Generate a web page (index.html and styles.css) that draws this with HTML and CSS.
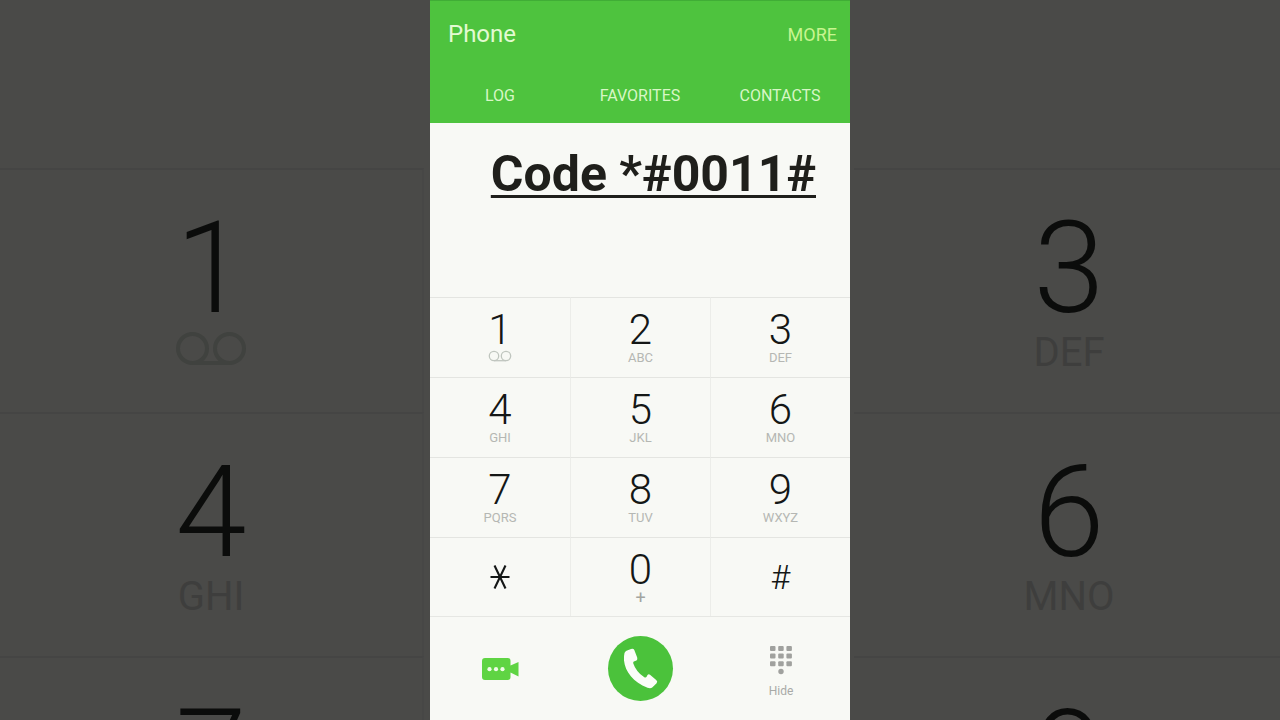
FILE: index.html
```html
<!DOCTYPE html>
<html lang="en">
<head>
<meta charset="utf-8">
<meta name="viewport" content="width=device-width, initial-scale=1">
<title>Phone</title>
<link rel="stylesheet" href="styles.css">
</head>
<body>
<div class="stage">
  <div class="side side-left" aria-hidden="true">
    <div class="side-cell">
      <span class="side-digit">1</span>
      <svg class="side-voicemail" viewBox="0 0 24 12"><g fill="none" stroke="currentColor" stroke-width="1.3"><circle cx="6" cy="6" r="4.7"/><circle cx="18" cy="6" r="4.7"/><path d="M6 10.7H18"/></g></svg>
    </div>
    <div class="side-cell"><span class="side-digit">4</span><span class="side-letters">GHI</span></div>
    <div class="side-cell"><span class="side-digit">7</span></div>
  </div>

  <main class="phone">
    <header class="header">
      <div class="title-bar">
        <h1 class="title">Phone</h1>
        <button class="more" type="button">MORE</button>
      </div>
      <nav class="tabs">
        <a class="tab" href="#log">LOG</a>
        <a class="tab" href="#favorites">FAVORITES</a>
        <a class="tab" href="#contacts">CONTACTS</a>
      </nav>
    </header>

    <div class="display"><output class="code">Code *#0011#</output></div>

    <div class="keypad">
      <button class="key" type="button" aria-label="1, voicemail">
        <span class="digit">1</span>
        <svg class="voicemail" viewBox="0 0 24 12"><g fill="none" stroke="currentColor" stroke-width="1.3"><circle cx="6" cy="6" r="4.7"/><circle cx="18" cy="6" r="4.7"/><path d="M6 10.7H18"/></g></svg>
      </button>
      <button class="key" type="button"><span class="digit">2</span><span class="letters">ABC</span></button>
      <button class="key" type="button"><span class="digit">3</span><span class="letters">DEF</span></button>
      <button class="key" type="button"><span class="digit">4</span><span class="letters">GHI</span></button>
      <button class="key" type="button"><span class="digit">5</span><span class="letters">JKL</span></button>
      <button class="key" type="button"><span class="digit">6</span><span class="letters">MNO</span></button>
      <button class="key" type="button"><span class="digit">7</span><span class="letters">PQRS</span></button>
      <button class="key" type="button"><span class="digit">8</span><span class="letters">TUV</span></button>
      <button class="key" type="button"><span class="digit">9</span><span class="letters">WXYZ</span></button>
      <button class="key key-symbol" type="button" aria-label="Star">
        <svg class="star" viewBox="0 0 20 24"><path d="M.5 12H19.500M4.500 .5L15.500 23.500M15.500 .5L4.500 23.500" fill="none" stroke="currentColor" stroke-width="2.100"/></svg>
      </button>
      <button class="key" type="button"><span class="digit">0</span><span class="letters plus">+</span></button>
      <button class="key key-symbol" type="button"><span class="hash">#</span></button>
    </div>

    <footer class="actions">
      <button class="action" type="button" aria-label="Video call">
        <svg class="camera" viewBox="0 0 37 22"><path fill="#5fd443" d="M3 0H25.500Q28.500 0 28.500 3V7.500L36.500 4V18.500L28.500 14.500V19Q28.500 22 25.500 22H3Q0 22 0 19V3Q0 0 3 0Z"/><g fill="#f0fce8"><circle cx="7.500" cy="11.200" r="2.100"/><circle cx="14" cy="11.200" r="2.100"/><circle cx="20.500" cy="11.200" r="2.100"/></g></svg>
      </button>
      <button class="action call" type="button" aria-label="Call">
        <svg class="handset" viewBox="0 0 65 65"><path fill="#fbfdf8" d="M16.500 17Q17 15.500 18.500 14.700L23 13Q25.500 12.300 26.300 14L29.200 21.500Q29.800 23.500 28.500 24.600L25.800 25.400Q24.900 26 25.300 27.400Q28 35.500 36 41Q37.700 42.200 38.600 40.800L39.500 39Q40.600 37.600 42 38.700L48.200 44Q50 45.500 48.600 47.200L44.500 51.200Q42.800 53 39.500 51.800C25.500 46.500 17 35.500 16 24.500Q15.700 20 16.500 17Z"/></svg>
      </button>
      <button class="action hide" type="button">
        <svg class="grid-icon" viewBox="0 0 22 29"><g fill="#a0a19e"><rect width="5.500" height="5" rx="1"/><rect x="8.200" width="5.500" height="5" rx="1"/><rect x="16.400" width="5.500" height="5" rx="1"/><rect y="7.600" width="5.500" height="5" rx="1"/><rect x="8.200" y="7.600" width="5.500" height="5" rx="1"/><rect x="16.400" y="7.600" width="5.500" height="5" rx="1"/><rect y="15.200" width="5.500" height="5" rx="1"/><rect x="8.200" y="15.200" width="5.500" height="5" rx="1"/><rect x="16.400" y="15.200" width="5.500" height="5" rx="1"/><circle cx="11" cy="25.500" r="2.700"/></g></svg>
        <span class="hide-label">Hide</span>
      </button>
    </footer>
  </main>

  <div class="side side-right" aria-hidden="true">
    <div class="side-cell"><span class="side-digit">3</span><span class="side-letters">DEF</span></div>
    <div class="side-cell"><span class="side-digit">6</span><span class="side-letters">MNO</span></div>
    <div class="side-cell"><span class="side-digit">9</span></div>
  </div>
</div>
</body>
</html>
```
FILE: styles.css
```css
* {
  box-sizing: border-box;
}

body {
  margin: 0;
  background: #4a4a48;
  font-family: Roboto, "Liberation Sans", sans-serif;
}

button {
  margin: 0;
  padding: 0;
  border: 0;
  background: none;
  color: inherit;
  font: inherit;
  cursor: pointer;
}

svg {
  display: block;
}

.stage {
  display: grid;
  grid-template-columns: 43fr 42fr 43fr;
  height: 100vh;
  min-height: 640px;
  overflow: hidden;
}

/* Dimmed, enlarged keypad on both sides of the phone */
.side {
  display: grid;
  grid-template-rows: repeat(3, 244px);
  align-content: start;
  padding-top: 168px;
  overflow: hidden;
  color: #0b0c0b;
}

.side-left {
  padding-right: 6px;
}

.side-left .side-cell {
  border-right: 2px solid #474746;
}

.side-right {
  padding-left: 4px;
}

.side-right .side-cell {
  padding-left: 4px;
}

.side-cell {
  display: flex;
  flex-direction: column;
  align-items: center;
  padding-top: 38px;
  border-top: 2px solid #454544;
}

.side-digit {
  font-size: 128px;
  font-weight: 300;
  line-height: 120px;
}

.side-letters {
  color: #3e3e3d;
  font-size: 40px;
  line-height: 50px;
}

.side-voicemail {
  width: 74px;
  height: 37px;
  margin-top: 2px;
  color: #40423f;
}

/* Phone screen */
.phone {
  display: flex;
  flex-direction: column;
  background: #f8f9f5;
  color: #141716;
}

.header {
  height: 123px;
  border-top: 1px solid #40ad36;
  background: #4ec33e;
}

.title-bar {
  display: flex;
  align-items: center;
  justify-content: space-between;
  height: 66px;
  padding: 0 13px 0 18px;
}

.title {
  margin: 0;
  color: #e3fad2;
  font-size: 24px;
  font-weight: 400;
}

.more {
  color: #c8f590;
  font-size: 18px;
}

.tabs {
  display: grid;
  grid-template-columns: repeat(3, 1fr);
}

.tab {
  color: #d8f7c6;
  font-size: 16px;
  line-height: 58px;
  text-align: center;
  text-decoration: none;
}

.display {
  flex: 1;
  padding: 21px 34px 0 0;
  text-align: right;
}

.code {
  color: #1f1f1b;
  font-size: 50px;
  font-weight: 700;
  line-height: 60px;
  text-decoration: underline;
  text-decoration-thickness: 3px;
  text-decoration-skip-ink: none;
  text-underline-offset: 4px;
}

.keypad {
  display: grid;
  grid-template-columns: repeat(3, 1fr);
  grid-template-rows: repeat(3, 80px) 79px;
  border-bottom: 1px solid #e6e7e3;
}

.key {
  display: flex;
  flex-direction: column;
  align-items: center;
  padding-top: 12px;
  border-top: 1px solid #e4e5e1;
  border-left: 1px solid #ecede9;
}

.key:nth-child(3n + 1) {
  border-left: 0;
}

.digit {
  font-size: 42px;
  font-weight: 300;
  line-height: 40px;
}

.letters {
  color: #b5b7b3;
  font-size: 13px;
  line-height: 16px;
}

.plus {
  color: #a3a5a1;
  font-size: 18px;
}

.voicemail {
  width: 24px;
  height: 12px;
  color: #c0c6bf;
}

.key-symbol {
  justify-content: center;
  padding-top: 0;
}

.star {
  width: 20px;
  height: 24px;
}

.hash {
  font-size: 34px;
  font-weight: 300;
  line-height: 40px;
}

.actions {
  display: grid;
  grid-template-columns: repeat(3, 1fr);
  height: 103px;
}

.action {
  display: flex;
  flex-direction: column;
  align-items: center;
  justify-content: center;
}

.camera {
  width: 37px;
  height: 22px;
}

.call {
  align-self: center;
  justify-self: center;
  width: 65px;
  height: 65px;
  border-radius: 50%;
  background: #4bc23b;
}

.handset {
  width: 65px;
  height: 65px;
}

.hide {
  gap: 8px;
  padding: 8px 0 0 2px;
}

.grid-icon {
  width: 22px;
  height: 29px;
}

.hide-label {
  color: #a9aaa7;
  font-size: 12px;
  line-height: 16px;
}
```
